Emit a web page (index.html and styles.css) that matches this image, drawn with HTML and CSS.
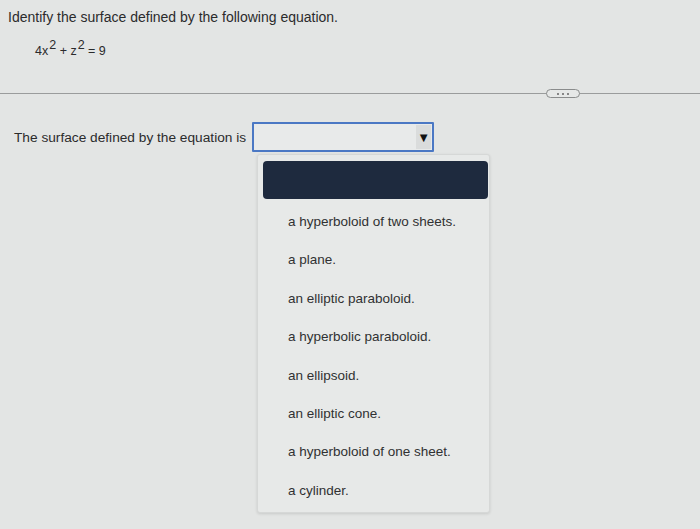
FILE: index.html
```html
<!DOCTYPE html>
<html>
<head>
<meta charset="utf-8">
<link rel="stylesheet" href="styles.css">
</head>
<body>
<div class="page">
  <div class="question">
    <p class="title">Identify the surface defined by the following equation.</p>
    <p class="equation">4x<sup>2</sup> + z<sup>2</sup> = 9</p>
  </div>
  <div class="divider">
    <span class="pill"><i></i><i></i><i></i></span>
  </div>
  <div class="answer">
    <div class="row">
      <span class="label">The surface defined by the equation is</span>
      <span class="select"><span class="arrow">&#9660;</span></span>
    </div>
    <div class="menu">
      <div class="menu-head"></div>
      <ul class="options">
        <li>a hyperboloid of two sheets.</li>
        <li>a plane.</li>
        <li>an elliptic paraboloid.</li>
        <li>a hyperbolic paraboloid.</li>
        <li>an ellipsoid.</li>
        <li>an elliptic cone.</li>
        <li>a hyperboloid of one sheet.</li>
        <li>a cylinder.</li>
      </ul>
    </div>
  </div>
</div>
</body>
</html>
```

FILE: styles.css
```css
html, body {
  margin: 0;
  padding: 0;
  background: #e3e5e4;
}
body {
  font-family: "Liberation Sans", Arial, sans-serif;
  color: #2b2b2c;
  width: 700px;
  height: 529px;
  overflow: hidden;
}
.page {
  display: flex;
  flex-direction: column;
}
.question {
  padding: 8px 0 0 8px;
  height: 79px;
}
.title {
  margin: 0;
  font-size: 14px;
  line-height: 18px;
}
.equation {
  margin: 18px 0 0 27px;
  font-size: 12.5px;
  line-height: 14px;
}
.equation sup {
  font-size: 12.5px;
  position: relative;
  top: -1px;
  vertical-align: super;
  line-height: 0;
  margin-left: 1px;
}
.divider {
  height: 13px;
  display: flex;
  align-items: center;
  padding-left: 546px;
  background: linear-gradient(#9a9c9c, #9a9c9c) 0 6px / 100% 1px no-repeat;
}
.pill {
  width: 32px;
  height: 7px;
  border: 1px solid #8a8c8c;
  border-radius: 5px;
  background: #e6e8e7;
  display: flex;
  justify-content: center;
  align-items: center;
  gap: 3px;
}
.pill i {
  width: 2px;
  height: 2px;
  background: #666;
  border-radius: 1px;
}
.answer {
  padding: 22px 0 0 14px;
}
.row {
  display: flex;
  align-items: center;
  gap: 6px;
}
.label {
  font-size: 13.7px;
}
.select {
  width: 177px;
  height: 26px;
  border: 2px solid #4b78c4;
  border-radius: 1px;
  background: #e8eaea;
  display: flex;
  justify-content: flex-end;
  align-items: center;
  padding-right: 1px;
}
.arrow {
  width: 15px;
  height: 24px;
  background: #dadcdc;
  display: flex;
  align-items: center;
  justify-content: center;
  font-size: 13px;
  color: #111;
}
.menu {
  margin: 2px 0 0 243px;
  width: 233px;
  height: 359px;
  box-sizing: border-box;
  background: #e7e9e8;
  border: 1px solid #d6d8d7;
  border-radius: 3px;
  box-shadow: 0 1px 3px rgba(0,0,0,0.12);
  padding: 6px 1px 0 5px;
}
.menu-head {
  height: 38px;
  background: #1e2a3e;
  border-radius: 4px;
}
.options {
  list-style: none;
  margin: 0;
  padding: 14px 0 0 25px;
}
.options li {
  font-size: 13.5px;
  height: 38.4px;
  line-height: 18px;
  color: #303132;
}
```
